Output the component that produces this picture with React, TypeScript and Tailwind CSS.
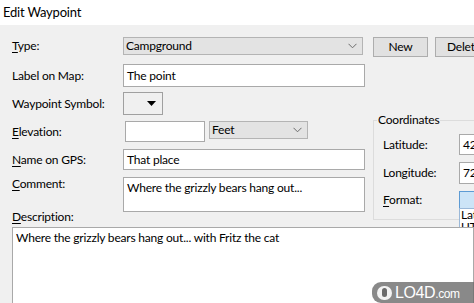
import type { ReactNode } from "react";

const FONT = { fontFamily: 'Lato, "Noto Sans", sans-serif' };

function Chevron() {
  return (
    <svg width="9" height="6" viewBox="0 0 9 6" aria-hidden="true">
      <path d="M0.5 0.8 L4.5 4.8 L8.5 0.8" fill="none" stroke="#6b6b6b" strokeWidth="1" />
    </svg>
  );
}

// label with an underlined access key
function Label({ k, rest }: { k?: string; rest: string }) {
  return (
    <span>
      {k && <span className="underline underline-offset-2">{k}</span>}
      {rest}
    </span>
  );
}

function Row({ label, children, className = "", top = false }: { label: ReactNode; children: ReactNode; className?: string; top?: boolean }) {
  return (
    <div className={`flex ${top ? "items-start" : "items-center"} ${className}`}>
      <div className={`w-[111px] shrink-0 ${top ? "pt-[1px]" : ""}`}>{label}</div>
      {children}
    </div>
  );
}

function TextBox({ value, className = "" }: { value?: string; className?: string }) {
  return (
    <div className={`bg-white border border-[#a9a9a9] px-[3px] flex items-center whitespace-nowrap ${className}`}>
      {value}
    </div>
  );
}

export default function App() {
  return (
    <div className="w-[474px] h-[303px] overflow-hidden bg-[#f0f0f0] text-[12px] tracking-[-0.2px] text-black leading-none" style={FONT}>
      {/* title bar */}
      <div className="h-[25px] bg-white flex items-center pl-[3px] text-[13px]">Edit Waypoint</div>

      <div className="flex">
        {/* left column */}
        <div className="w-[365px] shrink-0 pl-[12px] pt-[12px] flex flex-col">
          <Row label={<Label k="T" rest="ype:" />}>
            <div className="w-[240px] h-[18px] bg-[#e3e3e3] border border-[#b4b4b4] flex items-center justify-between pl-[2px] pr-[5px]">
              <span>Campground</span>
              <Chevron />
            </div>
          </Row>
          <Row label={<Label rest="Label on Map:" />} className="mt-[9px]">
            <TextBox value="The point" className="w-[242px] h-[23px]" />
          </Row>
          <Row label={<Label rest="Waypoint Symbol:" />} className="mt-[5px]">
            <div className="w-[40px] h-[23px] bg-[#f0f0f0] border border-[#a0a0a0] flex items-center justify-end pr-[6px]">
              <svg width="9" height="5" viewBox="0 0 9 5" aria-hidden="true">
                <path d="M0 0 H9 L4.5 5 Z" fill="#000" />
              </svg>
            </div>
          </Row>
          <Row label={<Label k="E" rest="levation:" />} className="mt-[6px]">
            <div className="flex items-center">
              <TextBox className="w-[80px] h-[21px] ml-[2px]" />
              <div className="ml-[4px] w-[99px] h-[18px] self-start bg-[#e3e3e3] border border-[#b4b4b4] flex items-center justify-between pl-[2px] pr-[5px]">
                <span>Feet</span>
                <Chevron />
              </div>
            </div>
          </Row>
          <Row label={<Label k="N" rest="ame on GPS:" />} className="mt-[7px]">
            <TextBox value="That place" className="w-[242px] h-[21px]" />
          </Row>
          <Row label={<Label k="C" rest="omment:" />} className="mt-[7px]" top>
            <div className="w-[242px] h-[35px] bg-white border border-[#a9a9a9] px-[3px] pt-[4px]">
              Where the grizzly bears hang out...
            </div>
          </Row>
          <div className="mt-[-3px] h-[15px] flex items-center">
            <Label k="D" rest="escription:" />
          </div>
        </div>

        {/* right column */}
        <div className="ml-[8px] pt-[12px] flex flex-col min-w-0 flex-1">
          <div className="flex gap-[7px]">
            <button className="w-[55px] h-[20px] shrink-0 bg-[#e1e1e1] border border-[#adadad]">New</button>
            <button className="w-[55px] h-[20px] shrink-0 bg-[#e1e1e1] border border-[#adadad] text-left pl-[11px]">Delete</button>
          </div>
          <fieldset className="mt-[55px] w-[120px] border border-[#dcdcdc] pl-[9px] pb-[10px]">
            <legend className="ml-[-6px] px-[1px] h-[16px] leading-[16px]">Coordinates</legend>
            <div className="flex items-center mt-[6px]">
              <span className="w-[76px] shrink-0">Latitude:</span>
              <TextBox value="42.0001" className="w-[60px] h-[21px] shrink-0" />
            </div>
            <div className="flex items-center mt-[7px]">
              <span className="w-[76px] shrink-0">Longitude:</span>
              <TextBox value="72.0001" className="w-[60px] h-[22px] shrink-0" />
            </div>
            <div className="flex items-center mt-[7px]">
              <span className="w-[76px] shrink-0"><Label k="F" rest="ormat:" /></span>
              <div className="relative w-[60px] h-[18px] shrink-0 bg-[#cce4f7] border border-[#5d9bd4]">
                {/* open list of the format box */}
                <div className="absolute left-[-1px] top-full w-[60px] bg-white border border-[#9ab8d8] px-[1px] pb-[1px] leading-[12px] whitespace-nowrap overflow-hidden">
                  <div>Latitude/Longitude</div>
                  <div>UTM</div>
                </div>
              </div>
            </div>
          </fieldset>
        </div>
      </div>

      {/* description */}
      <div className="relative mt-[3px] ml-[12px] h-[80px] bg-white border border-[#a9a9a9] px-[3px] pt-[4px]">
        Where the grizzly bears hang out... with Fritz the cat
        <div className="absolute right-[-2px] top-[54px] h-[21px] w-[103px] rounded-l-[9px] bg-[#6b6b6b]/80 flex items-center pl-[5px] gap-[3px] text-white tracking-normal">
          <span className="w-[15px] h-[14px] rounded-full bg-white/90 flex items-center justify-center">
            <span className="w-[5px] h-[9px] rounded-full bg-[#6b6b6b]" />
          </span>
          <span className="text-[16px] tracking-tight" style={{ fontFamily: '"Liberation Sans", sans-serif' }}>
            LO4D<span className="text-[12px]">.com</span>
          </span>
        </div>
      </div>
    </div>
  );
}
